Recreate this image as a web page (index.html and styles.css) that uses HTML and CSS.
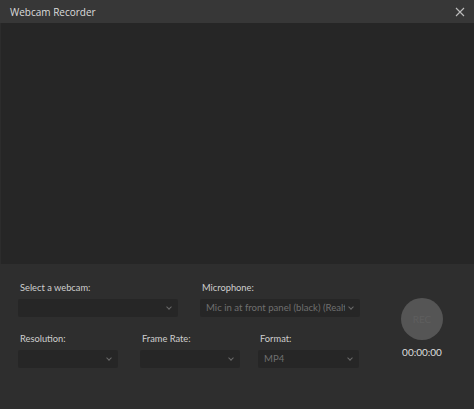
FILE: index.html
```html
<!doctype html>
<html lang="en">
<head>
	<meta charset="utf-8">
	<title>Webcam Recorder</title>
	<link rel="stylesheet" href="styles.css">
</head>
<body>
<div class="window">
	<div class="titlebar">
		<span class="title">Webcam Recorder</span>
		<span class="close">
			<svg width="10" height="10" viewBox="0 0 10 10"><path d="M1 1 L9 9 M9 1 L1 9" stroke="#bdbdbd" stroke-width="1.1" fill="none"/></svg>
		</span>
	</div>

	<div class="preview"></div>

	<div class="panel">
		<div class="fields">
			<div class="row row-top">
				<div class="field wide">
					<label>Select a webcam:</label>
					<div class="select"><span class="val"></span><i class="chev"></i></div>
				</div>
				<div class="field wide">
					<label>Microphone:</label>
					<div class="select"><span class="val">Mic in at front panel (black) (Realtek High Definition Audio)</span><i class="chev"></i></div>
				</div>
			</div>
			<div class="row row-bottom">
				<div class="field narrow">
					<label>Resolution:</label>
					<div class="select"><span class="val"></span><i class="chev"></i></div>
				</div>
				<div class="field narrow">
					<label>Frame Rate:</label>
					<div class="select"><span class="val"></span><i class="chev"></i></div>
				</div>
				<div class="field narrow format">
					<label>Format:</label>
					<div class="select"><span class="val">MP4</span><i class="chev"></i></div>
				</div>
			</div>
		</div>
		<div class="rec-box">
			<button class="rec">REC</button>
			<div class="timer">00:00:00</div>
		</div>
	</div>
</div>
</body>
</html>
```

FILE: styles.css
```css
html,body{
	margin:0;
	padding:0;
	background:#2e2e2e;
	font-family:"Lato","Open Sans",sans-serif;
	font-size:10px;
	color:#d0d0d0;
}
*{
	box-sizing:border-box;
}
.window{
	width:474px;
	height:409px;
	display:flex;
	flex-direction:column;
	background:#2e2e2e;
}
	.titlebar{
		height:23px;
		background:#373737;
		display:flex;
		align-items:center;
		justify-content:space-between;
		padding:0 10px 0 10px;
	}
	.title{
		font-family:"Open Sans",sans-serif;
		color:#dcdcdc;
		font-size:10px;
	}
	.close{
		display:flex;
		margin-right:-1px;
	}
	.preview{
		height:241px;
		background:#262626;
		border-left:1px solid #2c2c2c;
	}
	.panel{
		flex:1;
		display:flex;
		padding:17px 0 0 18px;
	}
	.fields{
		width:344px;
		flex:none;
	}
	.row{
		display:flex;
	}
	.row-top{
		gap:22px;
		margin-bottom:15px;
	}
	.row-bottom{
		gap:22px;
	}
	.field label{
		display:block;
		color:#cfcfcf;
		font-size:9.3px;
		line-height:13px;
		padding-left:2px;
		margin-bottom:5px;
	}
	.field.wide{
		width:160px;
	}
	.field.narrow{
		width:100px;
	}
	.field.format{
		width:101px;
		margin-left:-4px;
	}
	.select{
		height:18px;
		background:#262626;
		border-radius:2px;
		display:flex;
		align-items:center;
		padding:0 5px 0 6px;
	}
	.select .val{
		flex:1;
		white-space:nowrap;
		overflow:hidden;
		color:#6f6f6f;
		font-size:9.6px;
		line-height:18px;
	}
	.chev{
		width:4px;
		height:4px;
		border-right:1px solid #6a6a6a;
		border-bottom:1px solid #6a6a6a;
		transform:rotate(45deg);
		margin:0 2px 2px 4px;
	}
	.rec-box{
		flex:1;
		display:flex;
		flex-direction:column;
		align-items:center;
		padding:17px 0 0 8px;
	}
	.rec{
		width:42px;
		height:42px;
		border-radius:50%;
		border:none;
		background:#555555;
		color:#5e5e5e;
		font-family:"Lato",sans-serif;
		font-size:10px;
		padding:0;
	}
	.timer{
		margin-top:6px;
		color:#dedede;
		font-size:10px;
	}
```
